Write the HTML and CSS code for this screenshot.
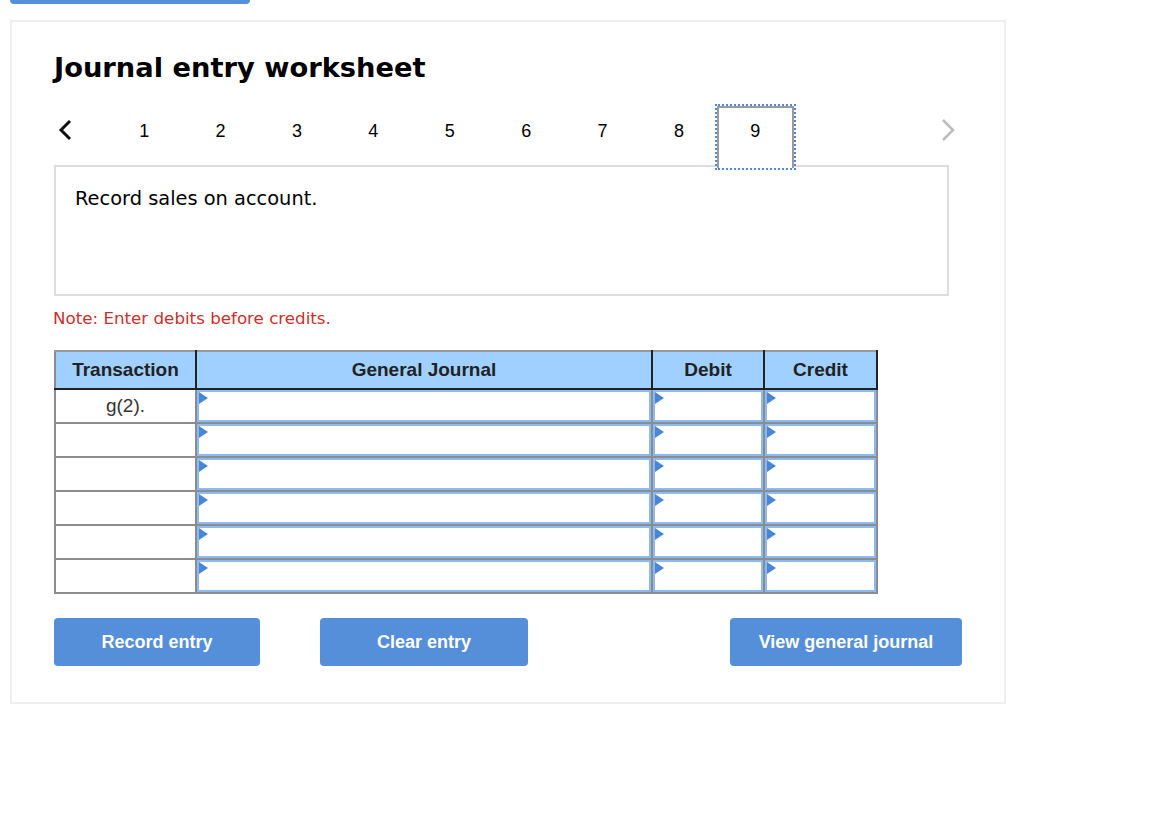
FILE: index.html
```html
<!DOCTYPE html>
<html lang="en">
<head>
    <meta charset="UTF-8">
    <title>Journal entry worksheet</title>
    <link rel="stylesheet" href="styles.css">
</head>
<body>
    <div class="topbar"></div>

    <div class="card">
        <h1>Journal entry worksheet</h1>

        <div class="steps">
            <div class="arrow prev">
                <svg width="16" height="22" viewBox="0 0 16 22"><polyline points="13,2 4,11 13,20" fill="none" stroke="#111" stroke-width="3"/></svg>
            </div>
            <div class="tab">1</div>
            <div class="tab">2</div>
            <div class="tab">3</div>
            <div class="tab">4</div>
            <div class="tab">5</div>
            <div class="tab">6</div>
            <div class="tab">7</div>
            <div class="tab">8</div>
            <div class="tab active">9</div>
            <div class="arrow next">
                <svg width="18" height="22" viewBox="0 0 18 22"><polyline points="4,1 14,11 4,21" fill="none" stroke="#bbb" stroke-width="2.5"/></svg>
            </div>
        </div>

        <div class="prompt">Record sales on account.</div>

        <p class="note">Note: Enter debits before credits.</p>

        <table class="journal">
            <colgroup>
                <col class="c-trans">
                <col class="c-gj">
                <col class="c-debit">
                <col class="c-credit">
            </colgroup>
            <thead>
                <tr>
                    <th>Transaction</th>
                    <th>General Journal</th>
                    <th>Debit</th>
                    <th>Credit</th>
                </tr>
            </thead>
            <tbody>
                <tr>
                    <td class="trans">g(2).</td>
                    <td><div class="field"></div></td>
                    <td><div class="field"></div></td>
                    <td><div class="field"></div></td>
                </tr>
                <tr>
                    <td class="trans"></td>
                    <td><div class="field"></div></td>
                    <td><div class="field"></div></td>
                    <td><div class="field"></div></td>
                </tr>
                <tr>
                    <td class="trans"></td>
                    <td><div class="field"></div></td>
                    <td><div class="field"></div></td>
                    <td><div class="field"></div></td>
                </tr>
                <tr>
                    <td class="trans"></td>
                    <td><div class="field"></div></td>
                    <td><div class="field"></div></td>
                    <td><div class="field"></div></td>
                </tr>
                <tr>
                    <td class="trans"></td>
                    <td><div class="field"></div></td>
                    <td><div class="field"></div></td>
                    <td><div class="field"></div></td>
                </tr>
                <tr>
                    <td class="trans"></td>
                    <td><div class="field"></div></td>
                    <td><div class="field"></div></td>
                    <td><div class="field"></div></td>
                </tr>
            </tbody>
        </table>

        <div class="actions">
            <button class="btn btn-record">Record entry</button>
            <button class="btn btn-clear">Clear entry</button>
            <button class="btn btn-view">View general journal</button>
        </div>
    </div>
</body>
</html>
```

FILE: styles.css
```css
body {
    margin: 0;
    font-family: "DejaVu Sans", Verdana, sans-serif;
    color: #000;
    background: #fff;
}
.topbar {
    margin-left: 10px;
    width: 240px;
    height: 4px;
    background-color: #558ed9;
    border-radius: 0 0 4px 4px;
}
.card {
    margin: 16px 0 0 10px;
    width: 910px;
    padding: 30px 41px 36px 41px;
    border: 2px solid #eee;
}
h1 {
    margin: 0 0 0 1px;
    font-size: 27.3px;
    line-height: 32px;
    font-weight: bold;
}
.steps {
    display: flex;
    width: 893px;
    height: 59px;
    margin: 22px 0 0 1px;
}
.arrow {
    width: 52px;
    padding-top: 13px;
    box-sizing: border-box;
}
.arrow.prev {
    padding-left: 3px;
}
.arrow.next {
    margin-left: auto;
    margin-right: -12px;
    width: 20px;
}
.tab {
    width: 76.4px;
    box-sizing: border-box;
    padding-top: 14px;
    text-align: center;
    font-family: "Liberation Sans", Arial, sans-serif;
    font-size: 18px;
    line-height: 22px;
}
.tab.active {
    border: 2px solid #9a9a9a;
    border-bottom: none;
    padding-top: 12px;
    outline: 2px dotted #4f88d6;
    position: relative;
    z-index: 1;
    background: #fff;
    height: 62px;
}
.prompt {
    margin: 0 0 0 1px;
    width: 872px;
    height: 106px;
    border: 2px solid #ddd;
    padding: 21px 0 0 19px;
    font-size: 19.4px;
    line-height: 22px;
}
.note {
    margin: 12px 0 0 0;
    color: #c9302c;
    font-size: 16.7px;
    line-height: 20px;
}
.journal {
    margin: 22px 0 0 1px;
    border-collapse: collapse;
    table-layout: fixed;
    width: 822px;
    font-family: "Liberation Sans", Arial, sans-serif;
}
.c-trans { width: 141px; }
.c-gj { width: 456px; }
.c-debit { width: 112px; }
.c-credit { width: 113px; }
.journal th {
    background-color: #9fd0ff;
    color: #222;
    font-size: 19px;
    font-weight: bold;
    height: 36px;
    padding: 0;
    border: 2px solid #222;
    border-top-color: #999;
}
.journal th:first-child {
    border-left-color: #8c8c8c;
}
.journal td {
    border: 2px solid #8c8c8c;
    height: 32px;
    padding: 0;
}
.journal td.trans {
    text-align: center;
    vertical-align: top;
    font-size: 19px;
    color: #333;
    padding-top: 5px;
    height: 27px;
}
.field {
    position: relative;
    height: 28px;
    border: 2px solid #8cbaf2;
    background: #fff;
}
.field::before {
    content: "";
    position: absolute;
    left: 0;
    top: 0;
    border-top: 6px solid transparent;
    border-bottom: 6px solid transparent;
    border-left: 9px solid #4a86d8;
}
.actions {
    display: flex;
    margin: 24px 0 0 1px;
}
.btn {
    height: 48px;
    border: none;
    border-radius: 4px;
    background-color: #558ed9;
    color: #fff;
    font-family: "Liberation Sans", Arial, sans-serif;
    font-size: 18px;
    font-weight: bold;
    padding: 0;
}
.btn-record {
    width: 206px;
}
.btn-clear {
    width: 208px;
    margin-left: 60px;
}
.btn-view {
    width: 232px;
    margin-left: 202px;
}
```
